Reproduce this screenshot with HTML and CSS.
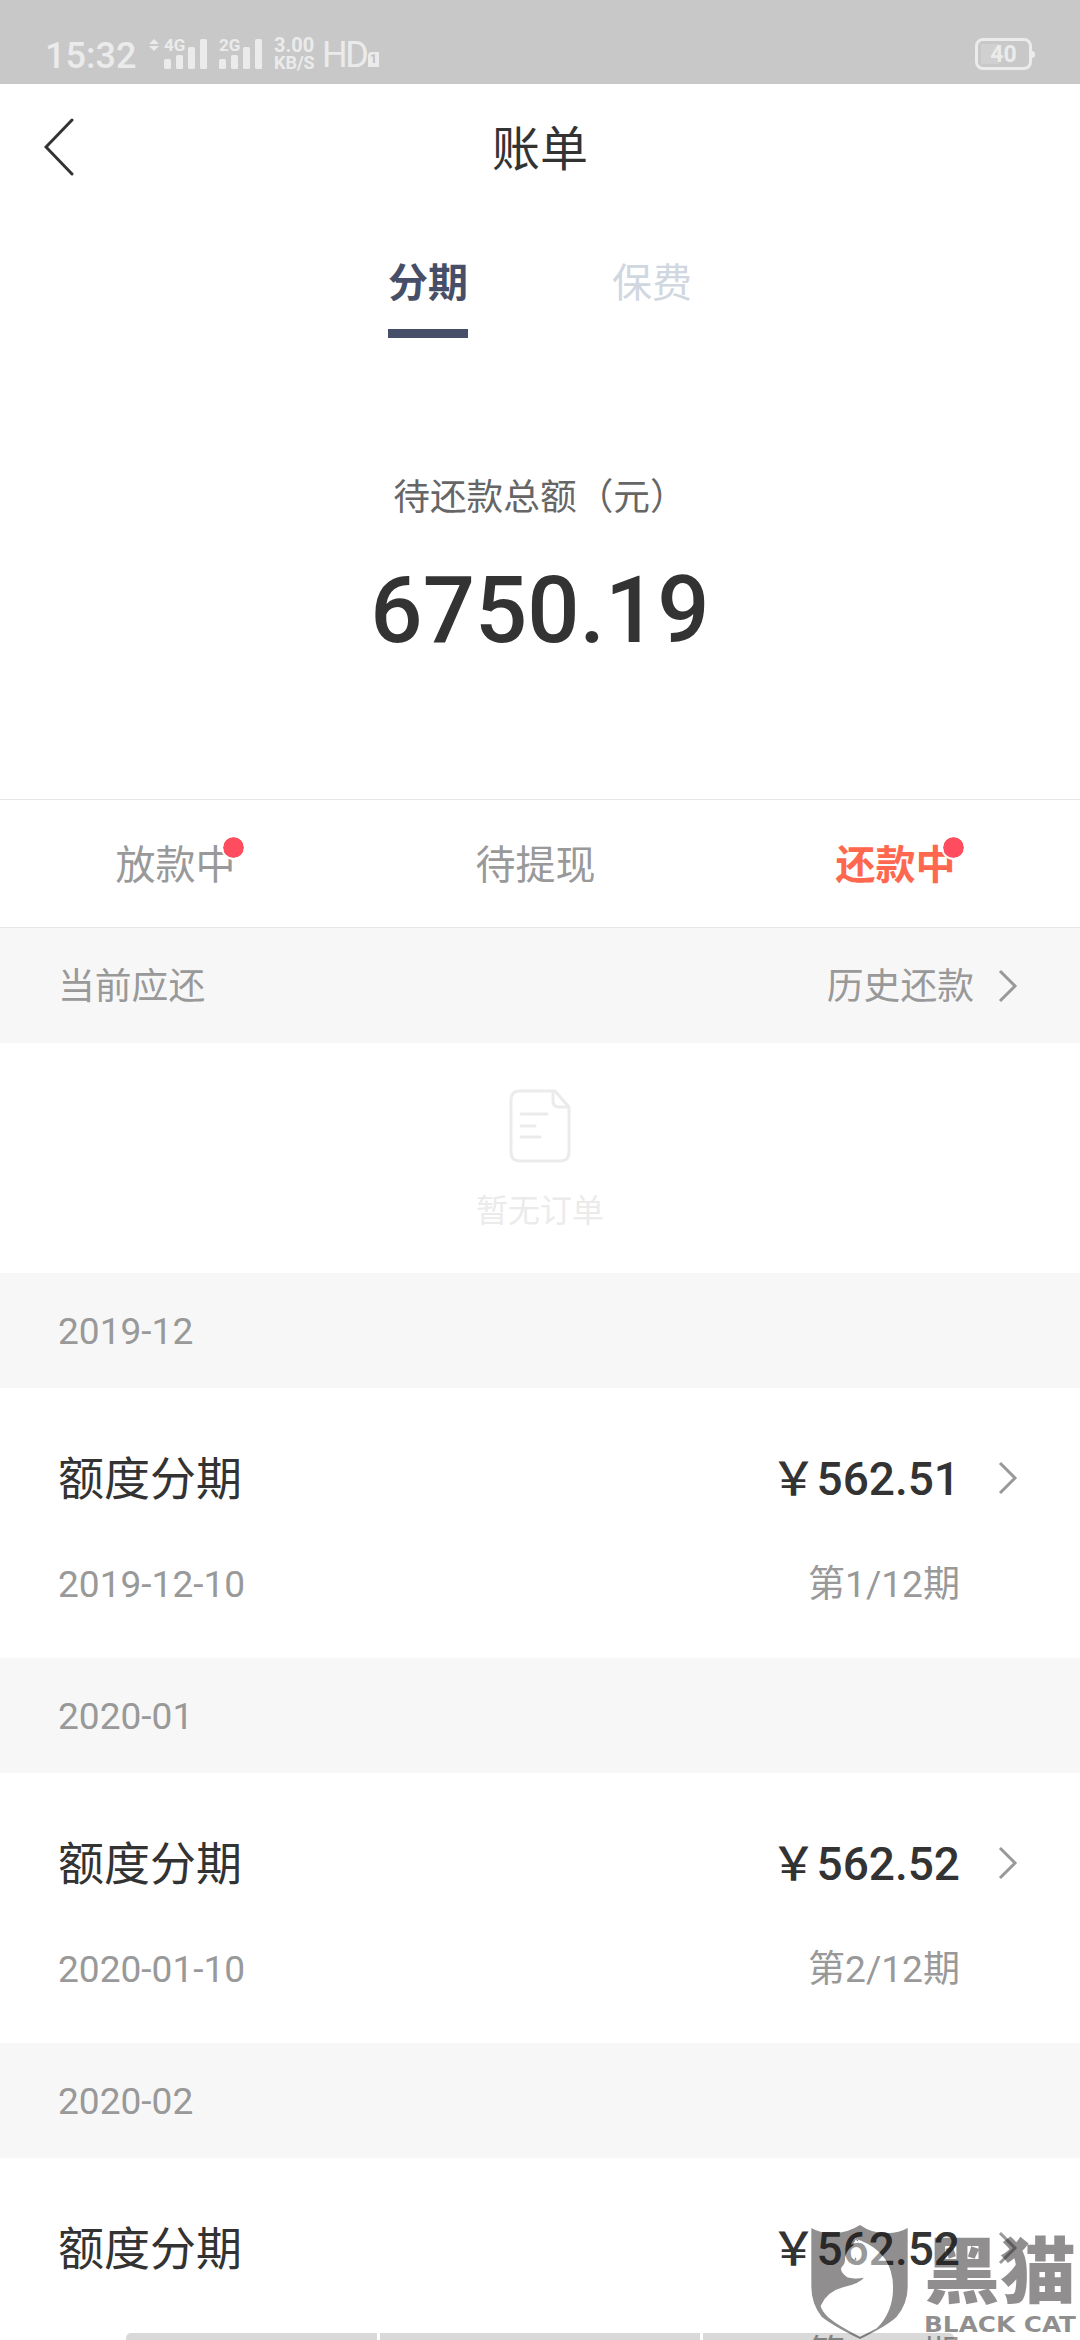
FILE: index.html
```html
<!DOCTYPE html>
<html lang="zh-CN">
<head>
  <meta charset="UTF-8">
  <title>账单</title>
  <meta name="viewport" content="width=device-width, initial-scale=1">
  <link rel="stylesheet" href="styles.css">
</head>
<body>
  <div class="statusbar">
    <span class="time">15:32</span>
    <svg class="arrows" width="10" height="12" viewBox="0 0 10 12"><path d="M0 5L5 0l5 5zM0 7h10l-5 5z"/></svg>
    <div class="signal">
      <span class="net">4G</span>
      <svg width="43" height="30" viewBox="0 0 43 30"><rect y="20" width="7" height="10" rx="1.5"/><rect x="12" y="16" width="7" height="14" rx="1.5"/><rect x="24" y="8" width="7" height="22" rx="1.5"/><rect x="36" width="7" height="30" rx="1.5"/></svg>
    </div>
    <div class="signal">
      <span class="net">2G</span>
      <svg width="43" height="30" viewBox="0 0 43 30"><rect y="20" width="7" height="10" rx="1.5"/><rect x="12" y="16" width="7" height="14" rx="1.5"/><rect x="24" y="8" width="7" height="22" rx="1.5"/><rect x="36" width="7" height="30" rx="1.5"/></svg>
    </div>
    <div class="speed"><span class="rate">3.00</span><span class="unit">KB/S</span></div>
    <span class="hd">HD</span>
    <span class="sim">1</span>
    <div class="battery"><span>40</span></div>
  </div>

  <header>
    <svg class="back" width="30" height="58" viewBox="0 0 30 58"><path d="M28 2L2 29l26 27"/></svg>
    <h1>账单</h1>
  </header>

  <nav class="tabs">
    <a class="tab active">分期</a>
    <a class="tab">保费</a>
  </nav>

  <section class="summary">
    <p class="label">待还款总额（元）</p>
    <p class="total">6750.19</p>
  </section>

  <nav class="states">
    <div class="state"><span class="name dot">放款中</span></div>
    <div class="state"><span class="name">待提现</span></div>
    <div class="state active"><span class="name dot">还款中</span></div>
  </nav>

  <div class="bar current">
    <span>当前应还</span>
    <span class="history">历史还款</span>
    <svg class="chevron" width="20" height="34" viewBox="0 0 20 34"><path d="M2 2l15 15L2 32"/></svg>
  </div>
  <div class="empty">
    <svg width="62" height="74" viewBox="0 0 62 74"><path d="M10 2h36l14 16v45q0 9-9 9H11q-9 0-9-9V11q0-9 8-9zM44 2v10q0 6 6 6h10M12 25h26M12 37h14M12 48h19"/></svg>
    <p>暂无订单</p>
  </div>

  <div class="bar">2019-12</div>
  <div class="bill">
    <div class="row main">
      <span>额度分期</span>
      <span class="money">￥562.51</span>
      <svg class="chevron" width="20" height="34" viewBox="0 0 20 34"><path d="M2 2l15 15L2 32"/></svg>
    </div>
    <div class="row sub"><span>2019-12-10</span><span class="term">第1/12期</span></div>
  </div>

  <div class="bar">2020-01</div>
  <div class="bill">
    <div class="row main">
      <span>额度分期</span>
      <span class="money">￥562.52</span>
      <svg class="chevron" width="20" height="34" viewBox="0 0 20 34"><path d="M2 2l15 15L2 32"/></svg>
    </div>
    <div class="row sub"><span>2020-01-10</span><span class="term">第2/12期</span></div>
  </div>

  <div class="bar">2020-02</div>
  <div class="bill">
    <div class="row main">
      <span>额度分期</span>
      <span class="money">￥562.52</span>
      <svg class="chevron" width="20" height="34" viewBox="0 0 20 34"><path d="M2 2l15 15L2 32"/></svg>
    </div>
    <div class="row sub"><span>2020-02-10</span><span class="term">第3/12期</span></div>
  </div>

  <!-- navigation hint at the bottom edge -->
  <div class="navhint"><i></i><i></i><i></i></div>

  <div class="watermark">
    <svg width="97" height="115" viewBox="18 15 291 345">
      <path class="shield" fill-rule="evenodd" d="M19 24Q45 40 85 40 130 38 165 15 200 40 245 40 285 38 308 24V200Q308 250 275 290 250 315 165 357 80 315 50 290 19 250 19 200ZM150 55Q158 60 168 62 262 100 264 200 265 275 215 325L165 350Q100 318 70 292 50 272 47 258 65 215 115 202 165 190 177 173 145 178 127 172 105 155 109 143 122 130 120 115 124 90 145 76 148 62 150 55Z"/>
      <path class="cat" d="M150 55Q158 60 168 62 262 100 264 200 265 275 215 325L165 350Q100 318 70 292 50 272 47 258 65 215 115 202 165 190 177 173 145 178 127 172 105 155 109 143 122 130 120 115 124 90 145 76 148 62 150 55Z"/>
      <path class="eye" d="M140 116q7 8 13 3l-2-6M147 66l4-9 9 6"/>
    </svg>
    <svg class="brand" width="156" height="110" viewBox="0 0 156 110">
      <text class="cn" x="0" y="70" textLength="152" transform="scale(1 .95)">黑猫</text>
      <text class="en" x="0" y="102" textLength="152" lengthAdjust="spacingAndGlyphs">BLACK CAT</text>
    </svg>
  </div>
</body>
</html>
```

FILE: styles.css
```css
* { box-sizing:border-box; }
body { font-family:Roboto,"Noto Sans CJK SC",sans-serif; margin:0; height:2340px; overflow:hidden; position:relative; background:#fff; color:#333; }
h1, p { margin:0; font-weight:normal; }
svg { display:block; flex:none; }

.statusbar { display:flex; align-items:flex-start; height:84px; padding:38px 45px 0 45px; background:#c8c8c8; color:#ebebeb; fill:#ebebeb; }
.time { width:104px; font-size:36px; line-height:36px; font-weight:500; }
.arrows { margin-top:1px; }
.signal { position:relative; margin:1px 0 0 5px; width:50px; }
.signal + .signal { margin-left:5px; }
.net { position:absolute; left:0; top:0; font-size:17px; line-height:12px; font-weight:700; }
.speed { margin-left:5px; width:49px; font-weight:700; }
.speed span { display:block; white-space:nowrap; }
.rate { font-size:20px; line-height:15px; }
.unit { font-size:18px; line-height:19px; }
.hd { font-size:36px; line-height:34px; width:46px; letter-spacing:-2.5px; margin-left:-1px; }
.sim { margin-top:14px; width:11px; height:15px; border-radius:4px 1px 1px 1px; background:#ebebeb; color:#c0c0c0; font-size:12px; line-height:15px; text-align:center; font-weight:700; }
.battery { position:relative; margin-left:auto; width:57px; height:32px; margin-right:3px; border:3px solid #ebebeb; border-radius:8px; background:linear-gradient(#d0d0d0,#d0d0d0) 3px 3px/18px 20px no-repeat; font-size:23px; line-height:28px; font-weight:700; text-align:center; }
.battery::after { content:""; position:absolute; right:-6px; top:10px; width:3px; height:7px; border-radius:0 3px 3px 0; background:#ebebeb; }

header { display:flex; align-items:center; height:126px; padding-left:44px; }
.back { fill:none; stroke:#333; stroke-width:3; stroke-linecap:round; }
h1 { flex:1; margin-right:74px; text-align:center; font-size:48px; line-height:60px; padding-top:5px; }

.tabs { display:flex; justify-content:center; gap:144px; height:128px; padding-top:43px; }
.tab { width:80px; height:85px; font-size:40px; line-height:62px; color:#d0d7df; white-space:nowrap; }
.tab.active { color:#474e68; font-weight:700; border-bottom:9px solid #474e68; }

.summary { height:461px; padding-top:128px; text-align:center; }
.label { font-size:36.7px; line-height:64px; color:#666; }
.total { margin-top:31px; font-size:92px; line-height:100px; font-weight:500; }

.states { display:flex; height:129px; border-top:1px solid #e6e6e6; border-bottom:1px solid #e6e6e6; }
.state { flex:1; padding-right:9px; display:flex; align-items:center; justify-content:center; font-size:40px; line-height:60px; color:#999; }
.state.active { color:#ff684f; font-weight:700; }
.name { position:relative; padding-top:4px; }
.dot::after { content:""; position:absolute; left:105px; top:3px; width:21px; height:21px; border:2px solid #fff; border-radius:50%; background:#ff4d5f; background-clip:padding-box; }

.bar { display:flex; align-items:center; height:115px; padding:2px 62px 0 58px; background:#f7f7f7; color:#999; font-size:37.1px; line-height:60px; }
.current { padding-top:3px; font-size:36.8px; }
.current .chevron { margin-bottom:3px; }
.history { margin-left:auto; margin-right:24px; }
.chevron { fill:none; stroke:#999; stroke-width:3; }

.empty { height:230px; display:flex; flex-direction:column; align-items:center; padding-top:46px; color:#ebebeb; }
.empty svg { fill:none; stroke:#ebebeb; stroke-width:3; stroke-linecap:round; stroke-linejoin:round; }
.empty p { margin-top:25px; font-size:32px; line-height:46px; }

.bill { height:270px; padding:61px 62px 0 58px; }
.row { display:flex; align-items:center; height:60px; line-height:60px; }
.main { font-size:46px; }
.main .chevron { margin-bottom:2px; }
.money { margin-left:auto; margin-right:38px; font-weight:500; }
.sub { margin-top:46px; padding-right:58px; justify-content:space-between; font-size:37.1px; color:#999; }

.navhint { position:absolute; left:126px; bottom:0; width:828px; height:7px; display:flex; gap:3px; border-radius:5px 5px 0 0; overflow:hidden; }
.navhint i { background:rgba(0,0,0,.15); flex:0 0 251px; }
.navhint i:nth-child(2) { flex-basis:320px; }
.navhint i:nth-child(3) { flex:1; }

.watermark { position:absolute; left:811px; top:2225px; width:269px; height:115px; display:flex; }
.shield { fill:rgba(33,29,29,.5); }
.cat { fill:rgba(255,255,255,.5); }
.eye { fill:none; stroke:#777; stroke-width:3; }
.brand { margin:5px 0 0 16px; fill:rgba(33,29,29,.5); }
.cn { font:900 76px "Noto Sans CJK SC",sans-serif; }
.en { font:bold 22px "DejaVu Sans",sans-serif; }
```
